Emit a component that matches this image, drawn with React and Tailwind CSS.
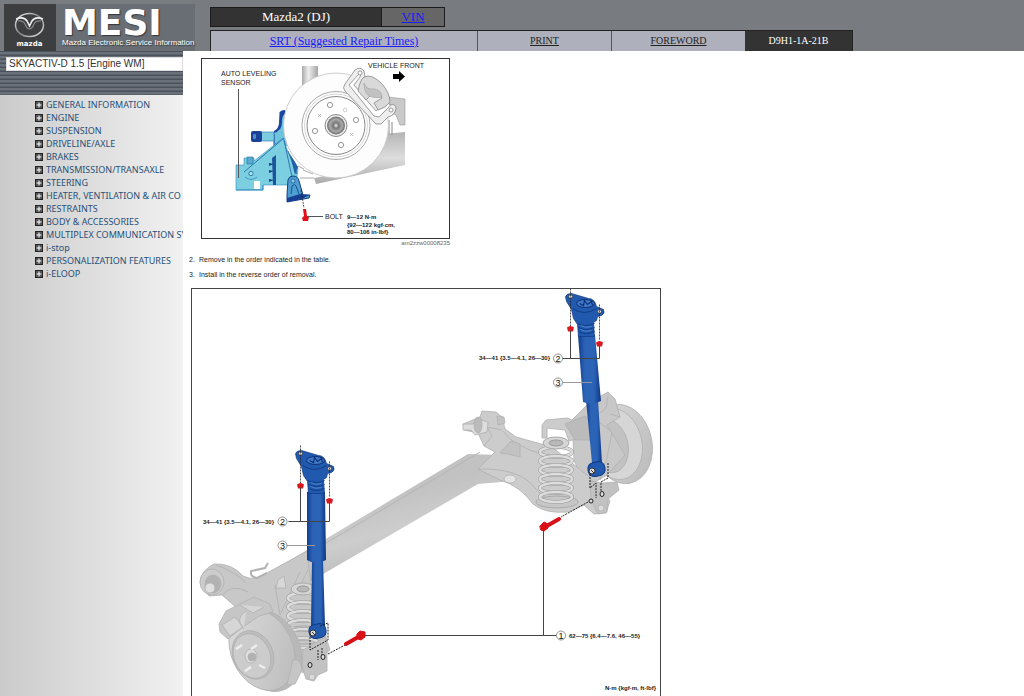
import React from "react";

const menuItems = [
  "GENERAL INFORMATION",
  "ENGINE",
  "SUSPENSION",
  "DRIVELINE/AXLE",
  "BRAKES",
  "TRANSMISSION/TRANSAXLE",
  "STEERING",
  "HEATER, VENTILATION & AIR CO",
  "RESTRAINTS",
  "BODY & ACCESSORIES",
  "MULTIPLEX COMMUNICATION SY",
  "i-stop",
  "PERSONALIZATION FEATURES",
  "i-ELOOP",
];

const MazdaLogo = () => (
  <svg viewBox="0 0 52 47" className="w-[52px] h-[47px] bg-[#3d3e3f]" role="img" aria-label="Mazda">
    <defs>
      <linearGradient id="chrome" x1="0" y1="0" x2="1" y2="1">
        <stop offset="0" stopColor="#f5f5f5" />
        <stop offset="0.5" stopColor="#858585" />
        <stop offset="1" stopColor="#eeeeee" />
      </linearGradient>
    </defs>
    <ellipse cx="25.500" cy="21" rx="14" ry="11.500" fill="none" stroke="url(#chrome)" strokeWidth="1.500" />
    <path
      d="M12 15 Q20 12 23 17 L25.500 22 L28 17 Q31 12 39 15"
      fill="none"
      stroke="#eeeeee"
      strokeWidth="1.600"
    />
    <path d="M14 17 Q19 16 21 20 Q23 25 25.500 25 Q28 25 30 20 Q32 16 37 17" fill="none" stroke="#8a8a8a" strokeWidth="1.200" />
    <text x="25.500" y="42" textAnchor="middle" className="fill-white font-['DejaVu_Sans'] font-bold text-[7px]">
      mazda
    </text>
  </svg>
);

const Header = () => (
  <header className="flex h-[51px] shrink-0 bg-[#787c80] font-['Liberation_Serif',serif]">
    <div className="flex w-[195px] shrink-0 pl-1 pt-1">
      <MazdaLogo />
      <div className="flex-1 bg-[#696d74] pl-1.5 text-white whitespace-nowrap [text-shadow:1px_1px_1px_#33363a]">
        <h1 className="pt-1 font-['DejaVu_Sans',sans-serif] text-[36px] leading-[30px] font-bold">MESI</h1>
        <p className="font-['Liberation_Sans',sans-serif] text-[8px] leading-[10px]">
          Mazda Electronic Service Information
        </p>
      </div>
    </div>
    <div className="ml-[15px] w-[643px] pt-[7px]">
      <div className="flex h-5 w-[235px] border border-[#1c1c1c] text-center text-[13px] leading-[18px]">
        <div className="w-[171px] border-r border-[#1c1c1c] bg-[#333333] text-white">Mazda2 (DJ)</div>
        <a href="#vin" className="flex-1 bg-[#666666] text-[#1a1aff] underline">
          VIN
        </a>
      </div>
      <nav className="mt-[3px] flex h-[21px] border-x border-t border-[#222222] text-center text-[10px] leading-[20px] text-[#222222]">
        <a href="#srt" className="w-[267px] border-r border-[#555555] bg-[#aeb0bc] text-[12px] text-[#1a1aff] underline">
          SRT (Suggested Repair Times)
        </a>
        <a href="#print" className="w-[134px] border-r border-[#555555] bg-[#aeb0bc] underline">
          PRINT
        </a>
        <a href="#foreword" className="w-[133px] bg-[#aeb0bc] underline">
          FOREWORD
        </a>
        <div className="flex-1 bg-[#333333] text-white">D9H1-1A-21B</div>
      </nav>
    </div>
  </header>
);

const PlusIcon = () => (
  <svg viewBox="0 0 8 8" className="size-2 shrink-0">
    <rect width="8" height="8" fill="#222222" />
    <rect x="1" y="1" width="6" height="6" fill="#555555" />
    <path d="M4 1.500v5M1.500 4h5" stroke="#ffffff" strokeWidth="1" />
  </svg>
);

const Sidebar = () => (
  <aside className="w-[183px] shrink-0 overflow-hidden bg-linear-to-r from-[#cbcbcb] to-[#f1f1f1]">
    <div className="h-11 bg-[repeating-linear-gradient(to_bottom,#4c525b_0px,#4c525b_1px,#6b7179_1px,#6b7179_3px,#5b616a_3px,#5b616a_4px)] pl-1.5 pt-1.5">
      <select
        aria-label="Model"
        className="block h-[14px] w-full appearance-none border border-[#dddddd] bg-white pl-0.5 font-['Liberation_Sans',sans-serif] text-[10px] leading-[12px] text-[#333333]"
      >
        <option>SKYACTIV-D 1.5 [Engine WM]</option>
      </select>
    </div>
    <ul className="pl-[35px] pt-[3px] font-['Noto_Sans',sans-serif] text-[9px] leading-[13px] whitespace-nowrap text-[#285078]">
      {menuItems.map((item) => (
        <li key={item}>
          <button type="button" className="flex h-[13px] items-center gap-[3px]">
            <PlusIcon />
            {item}
          </button>
        </li>
      ))}
    </ul>
  </aside>
);

const SensorDrawing = () => (
  <svg
    viewBox="202 59 247 179"
    className="h-auto w-full font-['Liberation_Sans',sans-serif] text-[7px]"
    role="img"
    aria-label="Auto leveling sensor"
  >
    <defs>
      <linearGradient id="tube" x1="0" y1="0" x2="1" y2="0">
        <stop offset="0" stopColor="#aaaaaa" />
        <stop offset="0.4" stopColor="#eeeeee" />
        <stop offset="1" stopColor="#a5a5a5" />
      </linearGradient>
      <linearGradient id="arm" x1="0" y1="0" x2="0" y2="1">
        <stop offset="0" stopColor="#b5b5b5" />
        <stop offset="0.5" stopColor="#dddddd" />
        <stop offset="1" stopColor="#aaaaaa" />
      </linearGradient>
      <radialGradient id="hub">
        <stop offset="0" stopColor="#eeeeee" />
        <stop offset="0.3" stopColor="#777777" />
        <stop offset="0.7" stopColor="#aaaaaa" />
        <stop offset="1" stopColor="#666666" />
      </radialGradient>
    </defs>

    {/* axle parts behind the disc */}
    <rect x="302" y="66" width="16" height="30" fill="url(#tube)" />
    <path d="M384 134 L405 132 V165 L316 184 L314 178 L345 172 Z" fill="url(#arm)" />
    <path d="M388 97 L405 99 V125 H400 L396 115 L388 112 Z" fill="#c9c9c9" stroke="#888888" strokeWidth="0.500" />
    <path d="M389 120 v14 M392 122 v13" stroke="#888888" strokeWidth="1" />
    <path d="M298 166 l6 3 M300 178 h14 M303 170 l10 4" stroke="#aaaaaa" strokeWidth="1" fill="none" />

    {/* sensor and bracket */}
    <path d="M279 112 L288 110 V146 L274 146 V133 L279 131 Z" fill="#6fc3dc" />
    <path d="M280 112 q1 -2 5 -2 v4 q-3 1 -3 8 q0 9 -8 11 v-2 q5 -3 5 -8 z" fill="#1947a0" />
    <path d="M274 134 V145 L279 142" fill="none" stroke="#1947a0" strokeWidth="1" />
    <path d="M261 132 H274 V141 H261 Z" fill="#7ccde0" stroke="#2471a8" strokeWidth="0.600" />
    <rect x="251" y="131" width="11" height="11" rx="2" fill="#1a4198" />
    <rect x="253" y="134" width="3" height="5" rx="1" fill="#5289c9" />
    <path
      d="M236 165 H244 V158 H254 V161 L283 138 L288 152 L298 168 L296 185 H263 V190 H236 Z"
      fill="#7ccfe1"
      stroke="#368abd"
      strokeWidth="0.600"
    />
    <path d="M290 154 L298 167 L295 175 L292 163 Z" fill="#2360ad" />
    <path d="M244 172 L284 138 M284 140 L292 177 M288 151 L297 174" stroke="#1b609d" strokeWidth="0.800" fill="none" />
    <path d="M272 158 L276 155 V185 L273 185 Z" fill="#1c559d" />
    <path d="M269 163 l5 1 -5 2z M269 170 l5 1 -5 2z M269 179 l5 1 -5 2z" fill="#174588" />
    <circle cx="251" cy="173.500" r="2.200" fill="#a3e2ed" stroke="#21649c" strokeWidth="0.800" />
    <path d="M247 157 h6 v7 h-6z" fill="#58abcd" stroke="#2471a8" strokeWidth="0.600" />
    <path d="M245 177 q6 5 12 0" stroke="#2471a8" strokeWidth="0.600" fill="none" />
    <rect x="254" y="181" width="6" height="8" fill="#ffffff" />
    <path d="M236 190 h27 v-5" stroke="#277fb5" strokeWidth="0.800" fill="none" />
    <path d="M288 180 Q289 176 293 176 Q298 176 299 181 L303 195 L310 195 L309 198 L287 202 L287 195 Z" fill="#4d9ed1" stroke="#143f83" strokeWidth="1" />
    <path d="M287 198 L300 194 L309 195 L302 199 L287 202 Z" fill="#163e92" />
    <path d="M291 194 l1 -8 q3 -3 4 0 l3 8" stroke="#1c5292" fill="none" />
    <circle cx="293" cy="181" r="2" fill="#8fd3e5" stroke="#1c5292" strokeWidth="0.800" />

    {/* brake disc */}
    <circle cx="336" cy="125.500" r="52.500" fill="#fdfdfd" stroke="#c2c2c2" strokeWidth="0.800" />
    <circle cx="336" cy="125.500" r="34" fill="#ffffff" stroke="#aaaaaa" strokeWidth="1" />
    <circle cx="336" cy="125.500" r="31.500" fill="none" stroke="#cccccc" strokeWidth="0.800" />
    <circle cx="336" cy="125.500" r="29" fill="none" stroke="#888888" strokeWidth="1" />
    <circle cx="336" cy="125.500" r="11" fill="#eeeeee" stroke="#888888" strokeWidth="1" />
    <circle cx="336" cy="125.500" r="9" fill="url(#hub)" />
    {[
      [330, 105],
      [356, 120],
      [315, 131],
      [341, 145],
    ].map(([x, y]) => (
      <circle key={x} cx={x} cy={y} r="2.600" fill="#ffffff" stroke="#888888" strokeWidth="0.900" />
    ))}
    <circle cx="345" cy="110" r="1.800" fill="none" stroke="#bbbbbb" strokeWidth="0.700" />
    <path d="M318 114 l3 3 m0 -3 l-3 3 M350 133 l3 3 m0 -3 l-3 3" stroke="#999999" strokeWidth="0.600" />

    {/* caliper */}
    <g stroke="#888888" strokeWidth="0.800">
      <path d="M345 84 L355 70 Q360 66 364 71 L365 77 L390 105 Q396 103 396 109 Q394 116 388 117 L381 124 L376 124 L345 91 Q342 88 345 84 Z" fill="#eeeeee" />
      <path d="M349 85 L358 75 q4 -3 2 2 l-6 8 l22 26 l10 -8 q6 0 3 4 l-10 10 -5 -1 z" fill="#ffffff" />
      <path d="M364 77 Q372 73 383 85 Q390 94 390 102 Q386 108 378 110 L374 103 L382 98 Q377 90 370 96 L366 100 L358 91 Q360 80 364 77 Z" fill="#d9d9d9" />
      <path d="M364 83 q3 7 9 6 q8 0 9 8 q-5 1 -10 0 q-8 -2 -8 -14z" fill="#c2c2c2" stroke="#aaaaaa" />
      <circle cx="360" cy="73" r="2" fill="#ffffff" />
      <circle cx="391" cy="110" r="2" fill="#ffffff" />
    </g>

    {/* bolt */}
    <path d="M301 190 L304 208" stroke="#222222" strokeWidth="0.800" strokeDasharray="2 1" />
    <path d="M303 209 h3 l1 7 2 1 -1 4 h-5 l-1 -3 2 -2 z" fill="#e01119" />

    <path d="M238.500 89 V178 M307 216.500 H323" stroke="#555555" strokeWidth="1" fill="none" />
    <path d="M393 74 H399 V71 L405 76.500 L399 82 V79 H393 Z" fill="#000000" />
    <g fill="#222222">
      <text x="221" y="76">AUTO LEVELING</text>
      <text x="221" y="85">SENSOR</text>
      <text x="368" y="68">VEHICLE FRONT</text>
      <text x="325" y="219">BOLT</text>
      <g className="font-bold text-[6px]">
        <text x="347" y="219">9—12 N·m</text>
        <text x="347" y="227">{"{92—122 kgf·cm,"}</text>
        <text x="347" y="234">{"80—106 in·lbf}"}</text>
      </g>
    </g>
  </svg>
);

/* upper mount of the absorber, origin is the left stud, drop is the height of the callout line */
const StrutMount = ({ x, y, drop }) => (
  <g transform={`translate(${x} ${y})`}>
    <path
      d="M-5 0 Q-4 -3 1 -3 L18 2 Q24 2 26 10 L33 13 Q35 17 31 19 L27 20 L26 24 L23 26 L24 40 L8 40 L7 28 L3 22 L1 13 L-4 5 Z"
      fill="#2159ae"
      stroke="#113a86"
      strokeWidth="0.700"
    />
    <ellipse cx="15" cy="7" rx="9" ry="4" fill="#3e78c6" stroke="#0d3278" strokeWidth="1" />
    <path d="M9 7 l4 2 1 -5 3 4 4 -3 1 4" stroke="#0d3278" strokeWidth="1.200" fill="none" />
    <path d="M2 12 Q14 20 26 12 M7 27 Q15 31 24 27 M8 31 Q16 35 24 31 M8 35 Q16 39 24 35" stroke="#103c86" fill="none" />
    <path d="M10 29 Q15 32 21 30 M10 33 Q15 36 21 34" stroke="#4d84cd" fill="none" />
    <circle cx="0" cy="0" r="2" fill="#dddddd" stroke="#333333" strokeWidth="0.800" />
    <circle cx="29" cy="15" r="2" fill="#dddddd" stroke="#333333" strokeWidth="0.800" />
    <path d="M0 -8 V30 M29 8 V44" stroke="#222222" strokeWidth="0.800" strokeDasharray="2 1" />
    <path d="M-3.500 31 q3.500 -3 7 0 l-1 4 -5 0z M25.500 46 q3.500 -3 7 0 l-1 4 -5 0z" fill="#d81920" />
    <path d={`M0 34 V${drop} M29 49 V${drop} M-12 ${drop} H29`} stroke="#444444" strokeWidth="1" fill="none" />
  </g>
);

const StrutEye = ({ x, y }) => (
  <g transform={`translate(${x} ${y})`}>
    <rect x="-9" y="-7" width="17" height="14" rx="6" fill="#2159ae" stroke="#113a86" transform="rotate(-12)" />
    <circle cx="-5" cy="2" r="3" fill="#dddddd" stroke="#333333" />
    <path d="M-6 1 l3 3" stroke="#333333" />
  </g>
);

const CoilSpring = ({ x, y, rings, rx }) => (
  <g transform={`translate(${x} ${y})`} fill="none">
    {rings.map((dy) => (
      <g key={dy}>
        <ellipse cy={dy} rx={rx} ry="5" stroke="#999999" strokeWidth="3.500" />
        <ellipse cy={dy} rx={rx} ry="5" stroke="#dddddd" strokeWidth="2.500" />
      </g>
    ))}
    <ellipse cy="-5" rx={rx - 3} ry="6" fill="#d6d6d6" stroke="#aaaaaa" />
    <ellipse cy="-5" rx={rx - 9} ry="3" fill="#b9b9b9" stroke="#999999" />
  </g>
);

const Callout = ({ x, y, label }) => (
  <g>
    <circle cx={x} cy={y} r="4.500" fill="#ffffff" stroke="#777777" strokeWidth="0.800" />
    <text x={x} y={y + 3} textAnchor="middle" className="text-[9px]" fill="#111111">
      {label}
    </text>
  </g>
);

const SuspensionDrawing = () => (
  <svg
    viewBox="192 289 468 420"
    className="h-auto w-full font-['Liberation_Sans',sans-serif]"
    role="img"
    aria-label="Rear axle and shock absorbers"
  >
    <defs>
      <linearGradient id="beam" x1="0.400" y1="0.300" x2="0.600" y2="0.700">
        <stop offset="0" stopColor="#c2c2c2" />
        <stop offset="0.500" stopColor="#cdcdcd" />
        <stop offset="1" stopColor="#bcbcbc" />
      </linearGradient>
      <linearGradient id="rotor" x1="0" y1="0" x2="1" y2="1">
        <stop offset="0" stopColor="#dddddd" />
        <stop offset="0.600" stopColor="#c8c8c8" />
        <stop offset="1" stopColor="#b8b8b8" />
      </linearGradient>
      <linearGradient id="damper" x1="0" y1="0" x2="1" y2="0">
        <stop offset="0" stopColor="#123d8d" />
        <stop offset="0.300" stopColor="#2b63b7" />
        <stop offset="0.700" stopColor="#2b63b7" />
        <stop offset="1" stopColor="#0f3684" />
      </linearGradient>
    </defs>

    {/* torsion beam */}
    <path d="M262 577 L468 454 L500 455 L545 478 L478 484 L275 602 Z" fill="url(#beam)" />
    <path d="M272 575 L480 452" stroke="#b5b5b5" strokeWidth="1" />

    {/* right trailing arm, wheel side */}
    <g stroke="#b0b0b0" strokeWidth="0.800">
      <ellipse cx="622" cy="444" rx="30" ry="40" fill="url(#rotor)" transform="rotate(-12 622 444)" />
      <ellipse cx="616" cy="444" rx="26" ry="36" fill="#d6d6d6" transform="rotate(-12 616 444)" />
      <ellipse cx="609" cy="446" rx="19" ry="27" fill="#c2c2c2" transform="rotate(-12 609 446)" />
      <path d="M572 420 L590 402 L608 392 L615 399 L620 417 L607 425 L625 455 L607 475 L585 488 L574 460 Z" fill="#c8c8c8" />
      <path d="M596 420 L612 432 L607 458 L600 480 M584 426 L606 408 L608 396 M610 414 l10 3" fill="none" />
      <path d="M463 424 L480 417 L482 411 L496 412 L502 417 L505 429 L516 437 L552 447 L588 476 L601 490 L610 501 L606 513 L594 514 L584 505 L568 512 Q545 514 533 504 Q520 486 500 480 L478 469 L495 452 L484 446 L478 433 L464 430 Z" fill="#cccccc" />
      <path d="M480 417 L487 427 L492 436 L484 446 M487 427 L502 430 M503 431 Q512 446 545 455 M478 469 Q520 468 535 488 Q548 505 570 503" fill="none" />
      <path d="M463 424 h10 l5 -5 10 3 -1 10 -12 3 -4 -5 h-8z" fill="#dddddd" />
      <ellipse cx="478" cy="425" rx="4" ry="8" fill="#bbbbbb" />
      <path d="M497 416 l7 1 1 6 -7 2z" fill="#c2c2c2" />
      <path d="M500 453 L511 441 L520 444 L520 457 L508 454 Z" fill="#c2c2c2" />
      <ellipse cx="510" cy="479" rx="6" ry="4" fill="#e5e5e5" />
      <path d="M590 481 L603 483 L617 482 L619 490 L608 499 L607 512 L598 514 L591 500 Z" fill="#c2c2c2" />
      <circle cx="601" cy="508" r="3" fill="#dddddd" />
      <path d="M542 438 V425 L546 420 L567 418 L578 422 L579 438 L569 441 L565 430 L547 428 V438 Z" fill="#cccccc" />
      <path d="M565 424 L585 416 L595 424 L590 440 L575 440 Z" fill="#bbbbbb" />
    </g>
    <ellipse cx="557" cy="502" rx="21" ry="6" fill="#c6c6c6" stroke="#aaaaaa" />
    <CoilSpring x={556} y={448} rx={16} rings={[4, 13, 22, 31, 40, 49]} />

    {/* left trailing arm */}
    <g stroke="#b0b0b0" strokeWidth="0.800">
      <path d="M200 583 Q201 570 214 564 Q232 563 243 576 Q255 582 267 573 L307 551 L312 592 L330 650 L304 673 L258 650 L238 609 L222 595 L209 596 Z" fill="#c8c8c8" />
      <path d="M222 595 Q232 583 248 592 M216 565 Q236 572 246 583 M300 572 L280 615 L275 585 M308 570 L298 590" fill="none" />
      <ellipse cx="212" cy="582" rx="12" ry="13" fill="#cccccc" />
      <ellipse cx="213" cy="584" rx="8" ry="9" fill="#b2b2b2" />
      <ellipse cx="210" cy="588" rx="5" ry="5" fill="#e0e0e0" />
      <path d="M267 573 L257 578 Q250 577 251 571 L265 568 L268 563" fill="none" stroke="#b2b2b2" strokeWidth="2" />
      <path d="M276 588 l2 -8 6 -4 2 12z" fill="#d7d7d7" />
    </g>
    <ellipse cx="304" cy="635" rx="22" ry="9" fill="#c6c6c6" stroke="#aaaaaa" />
    <CoilSpring x={303} y={594} rx={15} rings={[4, 13, 22, 31, 40, 49]} />
    <g stroke="#b0b0b0" strokeWidth="0.800">
      <ellipse cx="268" cy="651" rx="32" ry="42" fill="#b8b8b8" transform="rotate(-24 268 651)" />
      <ellipse cx="262" cy="650" rx="31" ry="42" fill="url(#rotor)" transform="rotate(-24 262 650)" />
      <ellipse cx="253" cy="655" rx="20" ry="25" fill="#bdbdbd" transform="rotate(-24 253 655)" />
      <ellipse cx="252" cy="656" rx="18" ry="23" fill="#cccccc" transform="rotate(-24 252 656)" />
      <ellipse cx="251" cy="656" rx="6" ry="7" fill="#dddddd" />
      <circle cx="252" cy="657" r="4" fill="#b2b2b2" />
      <path d="M236 649 l6 -4 M251 649 l6 -4 M245 671 l6 -4 M259 665 l6 3" stroke="#eeeeee" strokeWidth="2.500" />
      <path d="M219 624 L226 611 L242 603 L254 597 L270 604 L273 612 L259 616 L243 627 L228 639 L220 632 Z" fill="#c6c6c6" />
      <path d="M222 625 l13 -8 8 10 -13 9z M240 605 l13 8 11 -6 M246 611 q-12 8 -2 18" fill="#d6d6d6" />
      <path d="M303 650 L325 637 L327 649 L327 671 L318 675 L314 681 L306 679 L302 666 Z" fill="#c2c2c2" />
      <circle cx="312" cy="677" r="3" fill="#d9d9d9" />
      <path d="M293 660 q8 -2 9 10 l-7 14 -8 1z" fill="#c6c6c6" />
    </g>

    {/* shock absorbers */}
    <path d="M312 560 L323 560 L325 626 L311 626 Z" fill="url(#damper)" />
    <path d="M307 492 Q316 487 325 492 L326 560 Q316 566 307 560 Z" fill="url(#damper)" />
    <StrutEye x={318} y={631} />
    <StrutMount x={300.5} y={453.5} drop={68} />
    <path d="M586 400 L598 400 L602 463 L592 463 Z" fill="url(#damper)" />
    <path d="M578 335 Q587 331 595 335 L601 401 Q592 406 583 402 Z" fill="url(#damper)" />
    <StrutEye x={597} y={469} />
    <StrutMount x={570.5} y={296.5} drop={62} />

    {/* fitting lines */}
    <g fill="none" stroke="#222222" strokeWidth="1" strokeDasharray="2 1">
      <path d="M310 637 V650 L328 640 V623 L320 626 M318 650 V660 M322 648 V657 M328 654 L345 645" />
      <path d="M590 474 V488 L596 483 V498 M608 463 V478 L601 482 V492 M588 502 L561 517" />
    </g>
    <g fill="#dddddd" stroke="#222222">
      <ellipse cx="310" cy="665" rx="2" ry="2.500" />
      <ellipse cx="323" cy="657" rx="2" ry="2.500" />
      <ellipse cx="591" cy="501" rx="2" ry="2" />
      <ellipse cx="602" cy="494" rx="2" ry="2.500" />
    </g>

    {/* lower bolts */}
    <g fill="#d81118" stroke="#d81118" strokeLinecap="round">
      <path d="M346 644 L360 636 M545 527 L559 519" strokeWidth="4" />
      <path d="M357 634 l3 -3 5 1 v5 l-4 3 -3 -1z M540 526 l4 -4 4 2 v4 l-4 3 -3 -1z" strokeWidth="1" />
    </g>

    <g stroke="#444444" strokeWidth="1" fill="none">
      <path d="M365 635.500 H556 M543.500 530 V635.500" />
    </g>
    <path d="M287 545.500 H315 M562 382.500 H592" stroke="#999999" strokeWidth="1" />
    <Callout x={282.500} y={521.500} label="2" />
    <Callout x={282.500} y={545.500} label="3" />
    <Callout x={558} y={358.500} label="2" />
    <Callout x={558} y={382.500} label="3" />
    <Callout x={561} y={635.500} label="1" />
    <g className="font-bold text-[6px]" fill="#222222">
      <text x="274" y="524" textAnchor="end">{"34—41 {3.5—4.1, 26—30}"}</text>
      <text x="550" y="360" textAnchor="end">{"34—41 {3.5—4.1, 26—30}"}</text>
      <text x="569" y="638">{"62—75 {6.4—7.6, 46—55}"}</text>
      <text x="656" y="690" textAnchor="end">{"N·m {kgf·m, ft·lbf}"}</text>
    </g>
  </svg>
);

const Content = () => (
  <main className="flex-1 overflow-hidden bg-white pl-1.5 pt-[7px] font-['Liberation_Sans',sans-serif] text-[7px] text-[#222222]">
    <figure className="ml-3 w-[249px]">
      <div className="border border-[#333333]">
        <SensorDrawing />
      </div>
      <figcaption className="text-right text-[6px] leading-[8px] text-[#666666]">am2zzw00008235</figcaption>
    </figure>
    <ol className="mt-[5px] list-none leading-[15px]">
      <li className="flex">
        <span className="w-2.5">2.</span>
        <p>Remove in the order indicated in the table.</p>
      </li>
      <li className="flex">
        <span className="w-2.5">3.</span>
        <p>Install in the reverse order of removal.</p>
      </li>
    </ol>
    <figure className="ml-0.5 mt-1.5 w-[470px] border border-[#444444]">
      <SuspensionDrawing />
    </figure>
  </main>
);

const App = () => (
  <div className="flex h-screen flex-col overflow-hidden">
    <Header />
    <div className="flex min-h-0 flex-1">
      <Sidebar />
      <Content />
    </div>
  </div>
);

export default App;
